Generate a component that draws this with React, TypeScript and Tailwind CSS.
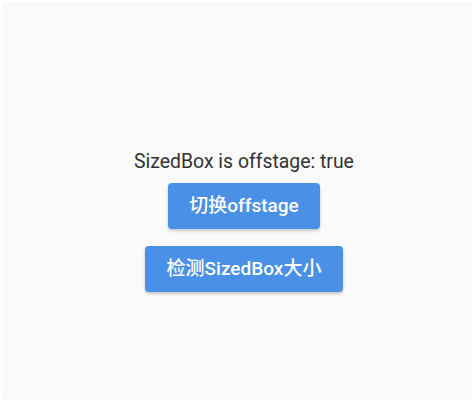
export default function App() {
  return (
    <div className="h-[401px] w-[474px] bg-white p-[2px]">
      <div
        className="flex h-full w-full flex-col items-center bg-[#fafafa] pl-[14px] pt-[147px] text-[#333333]"
        style={{ fontFamily: 'Roboto, "Noto Sans CJK SC", sans-serif' }}
      >
        <div className="text-[19.4px] leading-[26px]">SizedBox is offstage: true</div>
        <button className="mt-[8px] h-[46px] rounded-[4px] bg-[#4a90e6] px-[21px] text-[19px] font-medium text-white shadow-[0_2px_3px_rgba(0,0,0,0.2)]">
          切换offstage
        </button>
        <button className="mt-[17px] h-[46px] rounded-[4px] bg-[#4a90e6] px-[22px] text-[19px] font-medium text-white shadow-[0_2px_3px_rgba(0,0,0,0.2)]">
          检测SizedBox大小
        </button>
      </div>
    </div>
  );
}
